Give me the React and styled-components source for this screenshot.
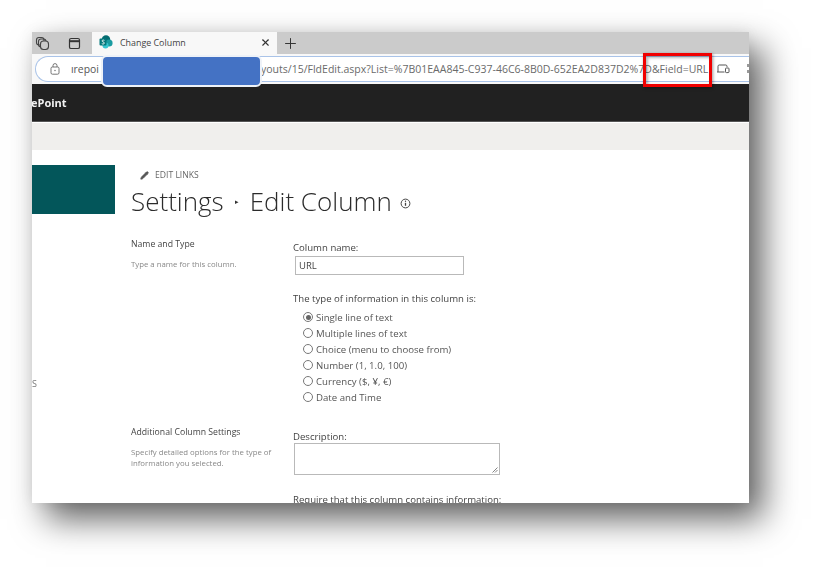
import React from 'react';
import styled, { createGlobalStyle } from 'styled-components';
import { Plus, X, Pencil } from 'lucide-react';

const GlobalStyle = createGlobalStyle`
  html, body { margin: 0; padding: 0; background: #fff; overflow: hidden; }
  body { font-family: "Open Sans", "Noto Sans", "Liberation Sans", sans-serif; }
`;

const Page = styled.div`
  width: 814px;
  height: 568px;
  padding: 32px 0 0 32px;
  box-sizing: border-box;
`;

const Shot = styled.div`
  position: relative;
  width: 717px;
  height: 471px;
  background: #fff;
  box-shadow: 14px 16px 32px rgba(0, 0, 0, 0.62), 0 0 14px rgba(0, 0, 0, 0.06);
`;

const Window = styled.div`
  width: 100%;
  height: 100%;
  overflow: hidden;
  display: flex;
  flex-direction: column;
  filter: blur(0.45px);
`;

const TabStrip = styled.div`
  height: 22px;
  flex: none;
  display: flex;
  background: #cbcbcb;
`;

const StripButtons = styled.div`
  width: 60px;
  display: flex;
  align-items: center;
  gap: 18px;
  padding-left: 3px;
  box-sizing: border-box;
  color: #333;
`;

const Tab = styled.div`
  width: 185px;
  display: flex;
  align-items: center;
  background: #f8f8f8;
  padding: 0 6px 2px 7px;
  box-sizing: border-box;
  font-size: 8.9px;
  color: #444;
`;

const TabTitle = styled.span`
  margin-left: 7px;
  flex: 1;
`;

const NewTab = styled.div`
  display: flex;
  align-items: center;
  margin-left: 5px;
  color: #333;
`;

const AddressRow = styled.div`
  height: 30px;
  flex: none;
  display: flex;
  align-items: center;
  background: #f8f8f8;
`;

const AddressBar = styled.div`
  flex: 1;
  height: 26px;
  margin-left: 3px;
  display: flex;
  align-items: center;
  background: #fff;
  border: 1px solid #a9c3e8;
  border-right: none;
  border-radius: 13px 0 0 13px;
  box-sizing: border-box;
  padding-left: 14px;
  white-space: nowrap;
  overflow: hidden;
`;

const HostText = styled.span`
  margin-left: 11px;
  width: 190px;
  flex: none;
  font-size: 10.4px;
  color: #555;
`;

const UrlText = styled.span`
  flex: none;
  font-size: 10.52px;
  color: #6a6a6a;
`;

const BarIcon = styled.span`
  flex: none;
  display: inline-flex;
  margin-left: ${p => p.$left}px;
`;

const Suite = styled.div`
  height: 37px;
  flex: none;
  display: flex;
  align-items: center;
  background: #212121;
  border-bottom: 1px solid #555;
  font-size: 11px;
  font-weight: 700;
  color: #f2f2f2;
`;

const SuiteName = styled.span`
  margin-left: -1px;
`;

const Ribbon = styled.div`
  height: 27px;
  flex: none;
  background: #f0efed;
  border-top: 1px solid #fff;
`;

const Body = styled.div`
  flex: 1;
  display: flex;
  min-height: 0;
`;

const Sidebar = styled.div`
  width: 99px;
  flex: none;
  padding-top: 15px;
`;

const SiteLogo = styled.div`
  width: 83px;
  height: 49px;
  background: #03565a;
`;

const NavStub = styled.div`
  margin-top: 163px;
  font-size: 9px;
  color: #777;
`;

const Main = styled.div`
  flex: 1;
  padding-top: 19px;
`;

const EditLinks = styled.div`
  display: flex;
  align-items: center;
  gap: 6px;
  padding-left: 9px;
  height: 12px;
  font-size: 8.6px;
  color: #666;
`;

const Title = styled.h1`
  display: flex;
  align-items: center;
  margin: 3px 0 0;
  height: 34px;
  font-size: 26px;
  font-weight: 300;
  color: #2b2b2b;
`;

const Crumb = styled.span`
  margin: 0 11px;
  font-size: 7px;
  color: #333;
`;

const InfoDot = styled.span`
  display: inline-flex;
  margin: 5px 0 0 8px;
`;

const Section = styled.div`
  display: grid;
  grid-template-columns: 162px 1fr;
  margin-top: ${p => p.$top}px;
`;

const SectionName = styled.div`
  font-size: 8.7px;
  line-height: 12px;
  color: #444;
`;

const SectionHint = styled.div`
  margin-top: 9px;
  width: 150px;
  font-size: 7.8px;
  line-height: 11px;
  color: #888;
`;

const Fields = styled.div`
  padding-top: ${p => p.$pad}px;
`;

const FieldLabel = styled.div`
  font-size: 9.6px;
  line-height: 13px;
  color: #444;
  margin-top: ${p => p.$top || 0}px;
`;

const TextBox = styled.div`
  width: 169px;
  height: 19px;
  margin: 2px 0 0 2px;
  padding-left: 3px;
  box-sizing: border-box;
  border: 1px solid #b9b9b9;
  font-size: 9.5px;
  line-height: 17px;
  color: #444;
`;

const TextArea = styled.div`
  position: relative;
  width: 206px;
  height: 32px;
  margin: 0 0 0 1px;
  box-sizing: border-box;
  border: 1px solid #b9b9b9;
`;

const Grip = styled.svg`
  position: absolute;
  right: 1px;
  bottom: 1px;
`;

const RadioList = styled.div`
  margin-top: 4px;
  padding-left: 10px;
`;

const RadioRow = styled.div`
  display: flex;
  align-items: center;
  gap: 3px;
  height: 16px;
  font-size: 9.64px;
  color: #555;
`;

const RadioMark = styled.span`
  width: 8px;
  height: 8px;
  border-radius: 50%;
  border: 1px solid #777;
  background: #fff;
  display: flex;
  align-items: center;
  justify-content: center;
  &::after {
    content: '';
    width: 5px;
    height: 5px;
    border-radius: 50%;
    background: ${p => (p.$on ? '#666' : 'transparent')};
  }
`;

const Redaction = styled.div`
  position: absolute;
  left: 69px;
  top: 23px;
  width: 161px;
  height: 32px;
  box-sizing: border-box;
  background: #4472c4;
  border: 2px solid #eef2f8;
  border-radius: 6px;
`;

const Highlight = styled.div`
  position: absolute;
  left: 611px;
  top: 21px;
  width: 69px;
  height: 34px;
  box-sizing: border-box;
  border: 3px solid #f00000;
  box-shadow: 1px 1px 3px rgba(0, 0, 0, 0.4), inset 2px 2px 3px rgba(0, 0, 0, 0.28);
`;

const SharePointIcon = () => (
  <svg width="14" height="14" viewBox="0 0 14 14">
    <circle cx="7" cy="4.5" r="4.2" fill="#036c70" />
    <circle cx="10" cy="8" r="3.6" fill="#1a9ba1" />
    <circle cx="6.5" cy="10.5" r="3" fill="#37c6d0" />
    <rect x="0.5" y="3.5" width="7" height="7" rx="1" fill="#03787c" />
    <path d="M5.4 5.4c-.9-.6-2.4-.4-2.4.6s2.4.8 2.4 2-1.8 1.2-2.6.6" fill="none" stroke="#fff" strokeWidth="0.9" />
  </svg>
);

const WorkspacesIcon = () => (
  <svg width="15" height="15" viewBox="0 0 15 15" fill="none" stroke="#444" strokeWidth="1.1">
    <rect x="1.5" y="1.5" width="7.5" height="7.5" rx="2.5" />
    <rect x="3.5" y="3" width="7.5" height="8" rx="2.5" />
    <rect x="5.5" y="5" width="8" height="8.5" rx="3" fill="#cbcbcb" />
  </svg>
);

const TabsIcon = () => (
  <svg width="13" height="13" viewBox="0 0 13 13" fill="none" stroke="#333" strokeWidth="1.2">
    <rect x="1.5" y="1.5" width="10" height="10" rx="1.6" />
    <path d="M1.5 4.2h10" strokeWidth="2" />
  </svg>
);

const LockIcon = () => (
  <svg width="10" height="12" viewBox="0 0 10 12" fill="none" stroke="#666" strokeWidth="0.9">
    <rect x="1" y="4" width="8" height="7.2" rx="1.4" />
    <path d="M3 4V2.6a2 2 0 0 1 4 0V4" />
    <circle cx="5" cy="7.5" r="0.7" fill="#666" stroke="none" />
  </svg>
);

const DeviceIcon = () => (
  <svg width="13" height="10" viewBox="0 0 13 10" fill="none" stroke="#555" strokeWidth="1">
    <path d="M1 8V2.2c0-.7.4-1.2 1.2-1.2h6.6c.7 0 1.2.5 1.2 1.2V3" />
    <path d="M0 8h7.5" />
    <rect x="8.5" y="4" width="3.5" height="4.6" rx="0.8" />
  </svg>
);

const ClippedIcon = () => (
  <svg width="6" height="10" viewBox="0 0 6 10" fill="#999">
    <rect x="0" y="0" width="3" height="3" />
    <rect x="0" y="6" width="3" height="3" />
  </svg>
);

const InfoIcon = () => (
  <svg width="11" height="11" viewBox="0 0 11 11" fill="none" stroke="#444" strokeWidth="1">
    <circle cx="5.5" cy="5.5" r="4.4" />
    <path d="M5.5 4.8v3" strokeWidth="1.3" />
    <circle cx="5.5" cy="3.2" r="0.7" fill="#444" stroke="none" />
  </svg>
);

const columnTypes = [
  'Single line of text',
  'Multiple lines of text',
  'Choice (menu to choose from)',
  'Number (1, 1.0, 100)',
  'Currency ($, ¥, €)',
  'Date and Time',
];

function App() {
  return (
    <Page>
      <GlobalStyle />
      <Shot>
        <Window>
          <TabStrip>
            <StripButtons>
              <WorkspacesIcon />
              <TabsIcon />
            </StripButtons>
            <Tab>
              <SharePointIcon />
              <TabTitle>Change Column</TabTitle>
              <X size={11} strokeWidth={2.4} color="#333" />
            </Tab>
            <NewTab>
              <Plus size={17} strokeWidth={1.4} />
            </NewTab>
          </TabStrip>
          <AddressRow>
            <AddressBar>
              <BarIcon $left={0}>
                <LockIcon />
              </BarIcon>
              <HostText>ırepoi</HostText>
              <UrlText>youts/15/FldEdit.aspx?List=%7B01EAA845-C937-46C6-8B0D-652EA2D837D2%7D&amp;Field=URL</UrlText>
              <BarIcon $left={9}>
                <DeviceIcon />
              </BarIcon>
              <BarIcon $left={17}>
                <ClippedIcon />
              </BarIcon>
            </AddressBar>
          </AddressRow>
          <Suite>
            <SuiteName>ePoint</SuiteName>
          </Suite>
          <Ribbon />
          <Body>
            <Sidebar>
              <SiteLogo />
              <NavStub>S</NavStub>
            </Sidebar>
            <Main>
              <EditLinks>
                <Pencil size={9} fill="#555" color="#555" />
                EDIT LINKS
              </EditLinks>
              <Title>
                Settings
                <Crumb>▸</Crumb>
                Edit Column
                <InfoDot>
                  <InfoIcon />
                </InfoDot>
              </Title>
              <Section $top={20}>
                <div>
                  <SectionName>Name and Type</SectionName>
                  <SectionHint>Type a name for this column.</SectionHint>
                </div>
                <Fields $pad={3}>
                  <FieldLabel>Column name:</FieldLabel>
                  <TextBox>URL</TextBox>
                  <FieldLabel $top={17}>The type of information in this column is:</FieldLabel>
                  <RadioList>
                    {columnTypes.map((label, i) => (
                      <RadioRow key={label}>
                        <RadioMark $on={i === 0} />
                        {label}
                      </RadioRow>
                    ))}
                  </RadioList>
                </Fields>
              </Section>
              <Section $top={21}>
                <div>
                  <SectionName>Additional Column Settings</SectionName>
                  <SectionHint>Specify detailed options for the type of information you selected.</SectionHint>
                </div>
                <Fields $pad={4}>
                  <FieldLabel>Description:</FieldLabel>
                  <TextArea>
                    <Grip width="6" height="6" viewBox="0 0 6 6" stroke="#666" strokeWidth="0.8">
                      <path d="M0.5 5.5 5.5 0.5M3 5.5 5.5 3" />
                    </Grip>
                  </TextArea>
                  <FieldLabel $top={18}>Require that this column contains information:</FieldLabel>
                </Fields>
              </Section>
            </Main>
          </Body>
        </Window>
        <Redaction />
        <Highlight />
      </Shot>
    </Page>
  );
}

export default App;
